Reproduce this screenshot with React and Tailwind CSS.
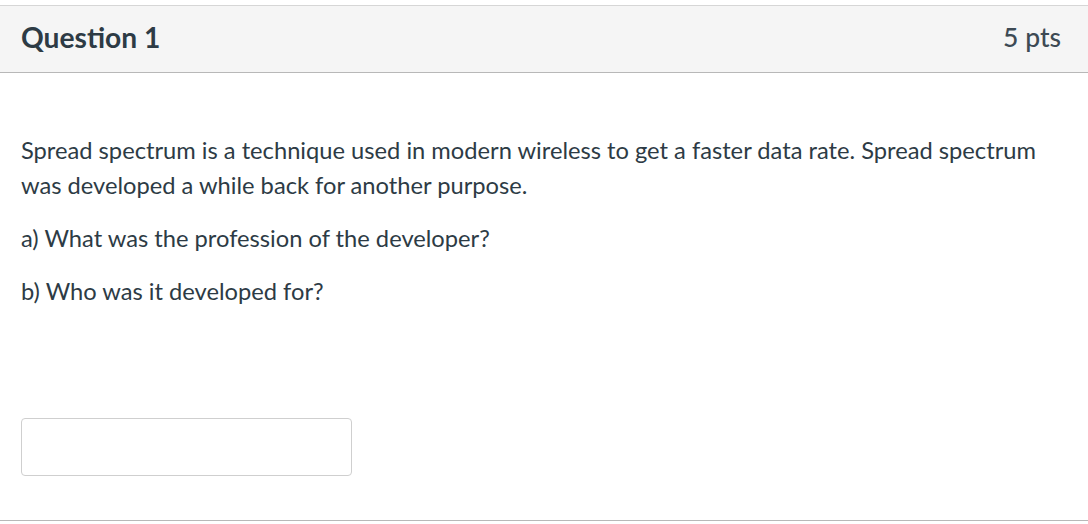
export default function App() {
  return (
    <main className="min-h-[524px] bg-white pt-[5px] font-['Lato','Open_Sans',sans-serif] text-[#2d3b45]">
      <section className="border-t border-b border-t-[#d6d6d6] border-b-[#b8b8b8]">
        <header className="flex h-[67px] items-center justify-between border-b border-[#b8b8b8] bg-[#f5f5f5] pb-[4px] pl-[21px] pr-[27px]">
          <h2 className="text-[28.2px] font-bold leading-none">Question 1</h2>
          <div className="text-[26.5px] font-medium leading-none text-[#3d4a54]">5 pts</div>
        </header>

        <div className="px-[21px] pt-[60px] pb-[44px] text-[23.7px] leading-[35px]">
          <p>
            Spread spectrum is a technique used in modern wireless to get a faster data rate. Spread spectrum was
            developed a while back for another purpose.
          </p>
          <p className="mt-[18px]">a) What was the profession of the developer?</p>
          <p className="mt-[18px]">b) Who was it developed for?</p>

          <input
            type="text"
            className="mt-[109px] block h-[58px] w-[331px] rounded border border-[#cfcfcf] bg-white px-3 outline-none"
          />
        </div>
      </section>
    </main>
  );
}
